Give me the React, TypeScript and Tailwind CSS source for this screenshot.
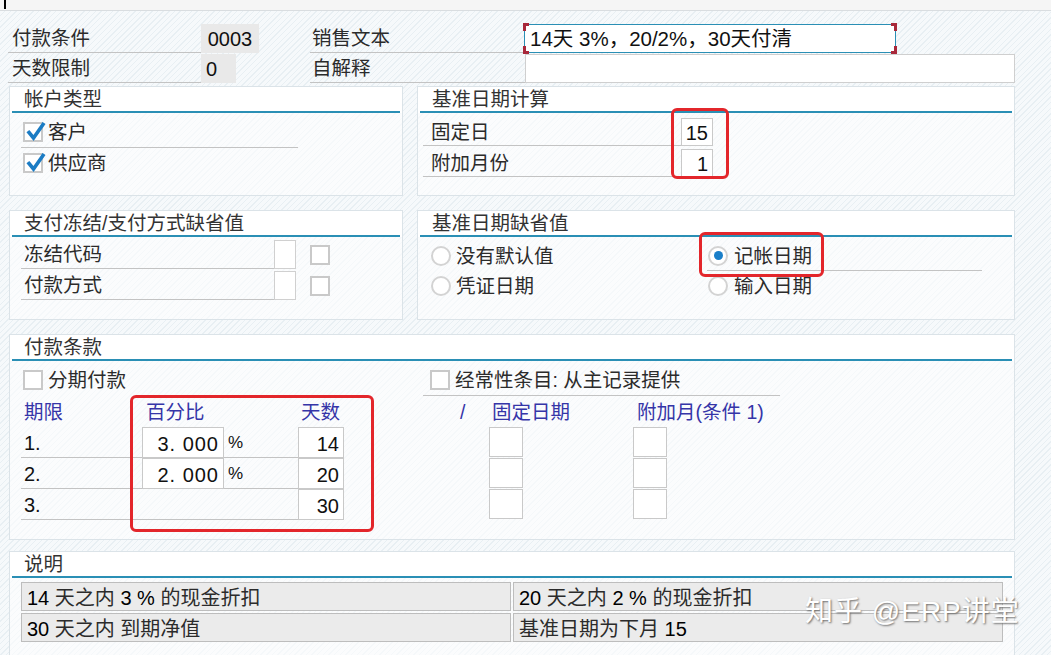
import React from "react";

const FONT = "font-['Liberation_Sans','Noto_Sans_CJK_SC',sans-serif]";

function Check({ checked = false }: { checked?: boolean }) {
  return (
    <span className="relative inline-flex h-[20px] w-[20px] shrink-0 items-center justify-center border-2 border-[#c9c9c9] bg-white">
      {checked ? (
        <svg viewBox="0 0 20 20" className="absolute left-[1px] top-[-2px] h-[20px] w-[20px]">
          <path d="M3 10.5 L7.5 16 L17 2.5" fill="none" stroke="#1b7cc4" strokeWidth="3.6" strokeLinecap="square" />
        </svg>
      ) : null}
    </span>
  );
}

function Radio({ checked = false }: { checked?: boolean }) {
  return (
    <span className="inline-flex h-[20px] w-[20px] shrink-0 items-center justify-center rounded-full border-2 border-[#d3d3d3] bg-white">
      {checked ? <span className="h-[9px] w-[9px] rounded-full bg-[#1a7fc9]" /> : null}
    </span>
  );
}

function Field({ value = "", className = "" }: { value?: string; className?: string }) {
  return (
    <div className={`flex items-center justify-end border border-[#c9c9c9] bg-white pr-[4px] pt-[2px] text-[20px] text-[#111] ${className}`}>
      {value}
    </div>
  );
}

function RedBox({ className }: { className: string }) {
  return <div className={`pointer-events-none absolute rounded-[6px] border-[3px] border-[#e3262b] ${className}`} />;
}

function Panel({ title, className = "", children }: { title: string; className?: string; children?: React.ReactNode }) {
  return (
    <section className={`relative border border-[#dbe3e8] bg-white/55 ${className}`}>
      <div className="bg-white px-[2px]">
        <div className="flex h-[26px] items-center border-b-2 border-[#2a8fb5] pl-[12px] pt-[2px] text-[19.5px] text-[#333]">{title}</div>
      </div>
      {children}
    </section>
  );
}

export default function App() {
  return (
    <div
      className={`relative h-[655px] w-[1051px] overflow-hidden bg-[repeating-linear-gradient(135deg,#f6f9fb_0px,#f6f9fb_3px,#e8eff3_3px,#e8eff3_4px)] text-[19.5px] text-[#2b2b2b] ${FONT}`}
    >
      <div className="relative h-[11px] border-b border-[#d9dde0] bg-[#f5f5f5]">
        <span className="absolute left-[4px] top-0 h-[9px] w-[2px] bg-black" />
      </div>

      {/* header fields */}
      <div className="mt-[13px] flex h-[29px]">
        <div className="ml-[8px] flex w-[193px] items-center border-b border-[#c3c3c3] pl-[4px] pt-[2px]">付款条件</div>
        <div className="flex w-[58px] items-center justify-center bg-[#e9e9e9] pt-[1px] text-[20px] text-[#111]">0003</div>
        <div className="ml-[51px] flex w-[214px] items-center border-b border-[#c3c3c3] pl-[2px] pt-[2px]">销售文本</div>
        <div className="relative flex w-[372px] items-center border border-[#2a8fb5] bg-white pl-[5px] pt-[2px] text-[20.5px] text-[#111]">
          14天 3%，20/2%，30天付清
          <span className="absolute left-[-2px] top-[-2px] h-[8px] w-[6px] border-l-[3px] border-t-[3px] border-[#a8283a]" />
          <span className="absolute right-[-2px] top-[-2px] h-[8px] w-[6px] border-r-[3px] border-t-[3px] border-[#a8283a]" />
          <span className="absolute bottom-[-2px] left-[-2px] h-[8px] w-[6px] border-b-[3px] border-l-[3px] border-[#a8283a]" />
          <span className="absolute bottom-[-2px] right-[-2px] h-[8px] w-[6px] border-b-[3px] border-r-[3px] border-[#a8283a]" />
        </div>
      </div>
      <div className="mt-[1px] flex h-[29px]">
        <div className="ml-[8px] flex w-[193px] items-center border-b border-[#c3c3c3] pl-[4px] pt-[2px]">天数限制</div>
        <div className="flex w-[35px] items-center bg-[#e9e9e9] pl-[5px] pt-[1px] text-[20px] text-[#111]">0</div>
        <div className="ml-[74px] flex w-[215px] items-center border-b border-[#c3c3c3] pl-[2px] pt-[2px]">自解释</div>
        <div className="w-[490px] border border-[#cfcfcf] bg-white" />
      </div>

      {/* panels row 1 */}
      <div className="mt-[3px] flex gap-[14px] pl-[9px]">
        <Panel title="帐户类型" className="h-[110px] w-[394px]">
          <div className="ml-[11px] mt-[4px] w-[277px]">
            <div className="flex h-[31px] items-center gap-[5px] border-b border-[#c3c3c3] pl-[2px]">
              <Check checked />
              <span className="pt-[2px]">客户</span>
            </div>
            <div className="flex h-[30px] items-center gap-[5px] pl-[2px]">
              <Check checked />
              <span className="pt-[2px]">供应商</span>
            </div>
          </div>
        </Panel>
        <Panel title="基准日期计算" className="h-[110px] w-[598px]">
          <div className="ml-[5px] mt-[5px]">
            <div className="flex h-[28px]">
              <div className="flex w-[258px] items-center border-b border-[#c3c3c3] pl-[8px] pt-[2px]">固定日</div>
              <Field value="15" className="w-[32px]" />
            </div>
            <div className="mt-[3px] flex h-[28px]">
              <div className="flex w-[258px] items-center border-b border-[#c3c3c3] pl-[8px] pt-[2px]">附加月份</div>
              <Field value="1" className="w-[32px]" />
            </div>
          </div>
          <RedBox className="left-[253px] top-[21px] h-[71px] w-[58px]" />
        </Panel>
      </div>

      {/* panels row 2 */}
      <div className="mt-[14px] flex gap-[14px] pl-[9px]">
        <Panel title="支付冻结/支付方式缺省值" className="h-[110px] w-[394px]">
          <div className="ml-[11px] mt-[3px]">
            <div className="flex h-[29px] items-stretch">
              <div className="flex w-[253px] items-center border-b border-[#c3c3c3] pl-[3px] pt-[2px]">冻结代码</div>
              <div className="w-[22px] border border-[#d0d0d0] bg-white" />
              <div className="ml-[14px] flex items-center">
                <Check />
              </div>
            </div>
            <div className="mt-[2px] flex h-[29px] items-stretch">
              <div className="flex w-[253px] items-center border-b border-[#c3c3c3] pl-[3px] pt-[2px]">付款方式</div>
              <div className="w-[22px] border border-[#d0d0d0] bg-white" />
              <div className="ml-[14px] flex items-center">
                <Check />
              </div>
            </div>
          </div>
        </Panel>
        <Panel title="基准日期缺省值" className="h-[110px] w-[598px]">
          <div className="ml-[13px] mt-[4px] grid grid-cols-[276px_275px]">
            <div className="flex h-[30px] items-center gap-[5px]">
              <Radio />
              <span className="pt-[2px]">没有默认值</span>
            </div>
            <div className="flex h-[30px] items-center gap-[6px] border-b border-[#c3c3c3] pl-[1px]">
              <Radio checked />
              <span className="pt-[2px]">记帐日期</span>
            </div>
            <div className="flex h-[30px] items-center gap-[5px]">
              <Radio />
              <span className="pt-[2px]">凭证日期</span>
            </div>
            <div className="flex h-[30px] items-center gap-[6px] pl-[1px]">
              <Radio />
              <span className="pt-[2px]">输入日期</span>
            </div>
          </div>
          <RedBox className="left-[281px] top-[21px] h-[45px] w-[125px]" />
        </Panel>
      </div>

      {/* payment terms */}
      <div className="mt-[14px] pl-[9px]">
        <Panel title="付款条款" className="h-[206px] w-[1006px]">
          <div className="relative mt-[3px] flex">
            <div className="ml-[11px] w-[340px]">
              <div className="flex h-[32px] items-center gap-[5px] pl-[2px]">
                <Check />
                <span className="pt-[2px]">分期付款</span>
              </div>
              <div className="flex h-[31px] items-center pt-[3px] text-[#3535a8]">
                <span className="w-[125px] pl-[3px]">期限</span>
                <span className="w-[155px]">百分比</span>
                <span>天数</span>
              </div>
              {[
                ["1.", "3. 000", "14"],
                ["2.", "2. 000", "20"],
                ["3.", "", "30"],
              ].map(([n, pct, days]) => (
                <div key={n} className="flex h-[31px]">
                  {pct ? (
                    <>
                      <div className="flex w-[121px] items-center border-b border-[#c3c3c3] pl-[3px] pt-[2px] text-[20px] text-[#111]">{n}</div>
                      <Field value={pct} className="w-[82px] tracking-[1px]" />
                      <div className="flex w-[74px] items-center border-b border-[#c3c3c3] pl-[4px] pt-[2px] text-[17px] text-[#111]">%</div>
                    </>
                  ) : (
                    <div className="flex w-[277px] items-center border-b border-[#c3c3c3] pl-[3px] pt-[2px] text-[20px] text-[#111]">{n}</div>
                  )}
                  <Field value={days} className="w-[46px]" />
                </div>
              ))}
            </div>
            <div className="ml-[62px]">
              <div className="flex h-[32px] w-[357px] items-center gap-[5px] border-b border-[#c3c3c3] pl-[7px]">
                <Check />
                <span className="pt-[2px]">经常性条目: 从主记录提供</span>
              </div>
              <div className="flex h-[31px] items-center pt-[3px] text-[#3535a8]">
                <span className="w-[69px] pl-[37px]">/</span>
                <span className="w-[145px]">固定日期</span>
                <span>
                  附加月(条件 <span className="font-['Liberation_Sans']">1</span>)
                </span>
              </div>
              {[0, 1, 2].map((i) => (
                <div key={i} className="flex h-[31px] pl-[66px]">
                  <div className="h-[30px] w-[34px] border border-[#c9c9c9] bg-white" />
                  <div className="ml-[110px] h-[30px] w-[34px] border border-[#c9c9c9] bg-white" />
                </div>
              ))}
            </div>
          </div>
          <RedBox className="left-[120px] top-[60px] h-[137px] w-[244px]" />
        </Panel>
      </div>

      {/* description */}
      <div className="mt-[11px] pl-[9px]">
        <Panel title="说明" className="h-[120px] w-[1006px]">
          <div className="ml-[11px] mt-[4px] grid w-[982px] grid-cols-2 gap-[2px] text-[20px]">
            <div className="flex h-[29px] items-center border border-[#bdbdbd] bg-[#ebebeb] pl-[5px] pt-[2px]">
              <b className="font-normal text-black">14</b>&nbsp;天之内&nbsp;<b className="font-normal text-black">3 %</b>&nbsp;的现金折扣
            </div>
            <div className="flex h-[29px] items-center border border-[#bdbdbd] bg-[#ebebeb] pl-[5px] pt-[2px]">
              <b className="font-normal text-black">20</b>&nbsp;天之内&nbsp;<b className="font-normal text-black">2 %</b>&nbsp;的现金折扣
            </div>
            <div className="flex h-[29px] items-center border border-[#bdbdbd] bg-[#ebebeb] pl-[5px] pt-[2px]">
              <b className="font-normal text-black">30</b>&nbsp;天之内&nbsp;到期净值
            </div>
            <div className="flex h-[29px] items-center border border-[#bdbdbd] bg-[#ebebeb] pl-[5px] pt-[2px]">
              基准日期为下月&nbsp;<b className="font-normal text-black">15</b>
            </div>
          </div>
        </Panel>
      </div>

      <div className="absolute left-[805px] top-[591px] text-[28px] tracking-[1px] text-white [text-shadow:1px_1px_2px_#6b6b6b]">
        知乎 @ERP讲堂
      </div>
    </div>
  );
}
